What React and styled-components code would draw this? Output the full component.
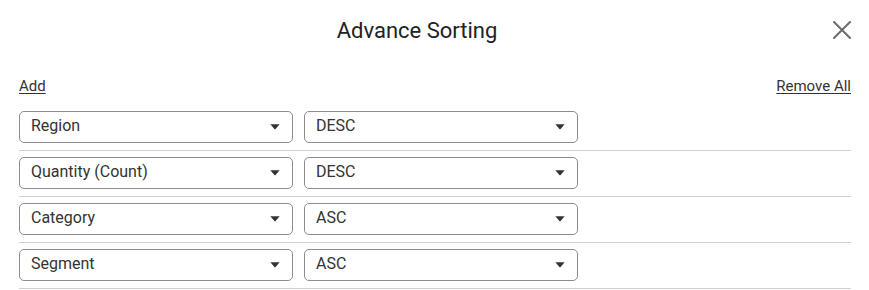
import React from 'react';
import styled, { createGlobalStyle } from 'styled-components';

const GlobalStyle = createGlobalStyle`
  body {
    margin: 0;
    background: #ffffff;
    font-family: Roboto, "Liberation Sans", Arial, sans-serif;
  }
`;

const Wrapper = styled.div`
  width: 869px;
  height: 290px;
  padding: 18px 18px 0 19px;
  box-sizing: border-box;
  overflow: hidden;
  display: flex;
  flex-direction: column;
`;

const Header = styled.div`
  height: 26px;
  display: flex;
  align-items: center;
`;

const Title = styled.h2`
  flex: 1;
  margin: 0;
  text-align: center;
  font-size: 22px;
  line-height: 26px;
  font-weight: 400;
  color: #222222;
`;

const Close = styled.button`
  width: 36px;
  height: 18px;
  padding: 0;
  border: none;
  background: none;
  cursor: pointer;
  display: flex;
  justify-content: flex-end;
  margin-top: -2px;
`;

const Actions = styled.div`
  margin-top: 33px;
  margin-bottom: 10px;
  display: flex;
  justify-content: space-between;
`;

const Link = styled.a`
  font-size: 15px;
  line-height: 18px;
  color: #333333;
  text-decoration: underline;
  text-underline-offset: 2px;
  cursor: pointer;
`;

const List = styled.div`
  display: flex;
  flex-direction: column;
`;

const Row = styled.div`
  display: flex;
  gap: 11px;
  padding: 6px 0 7px;
  border-bottom: 1px solid #d0d0d0;
`;

const Select = styled.div`
  width: ${props => props.width}px;
  height: 32px;
  box-sizing: border-box;
  padding: 0 12px 3px 11px;
  border: 1px solid #8c8c8c;
  border-radius: 5px;
  display: flex;
  align-items: center;
  justify-content: space-between;
  font-size: 16px;
  color: #333333;
  cursor: pointer;

  svg {
    margin-top: 3px;
  }
`;

const Caret = () => (
  <svg width="10" height="6" viewBox="0 0 10 6">
    <path d="M0.4 0.3 H9.6 L5.6 5 Q5 5.7 4.4 5 Z" fill="#333333" />
  </svg>
);

const sorts = [
  { field: 'Region', order: 'DESC' },
  { field: 'Quantity (Count)', order: 'DESC' },
  { field: 'Category', order: 'ASC' },
  { field: 'Segment', order: 'ASC' },
];

const App = () => (
  <>
    <GlobalStyle />
    <Wrapper>
      <Header>
        <Title>Advance Sorting</Title>
        <Close aria-label="close">
          <svg width="18" height="18" viewBox="0 0 18 18">
            <path d="M1 1 L17 17 M17 1 L1 17" stroke="#6b6b6b" strokeWidth="2" strokeLinecap="round" />
          </svg>
        </Close>
      </Header>
      <Actions>
        <Link>Add</Link>
        <Link>Remove All</Link>
      </Actions>
      <List>
        {sorts.map(sort => (
          <Row key={sort.field}>
            <Select width={274}>
              {sort.field}
              <Caret />
            </Select>
            <Select width={274}>
              {sort.order}
              <Caret />
            </Select>
          </Row>
        ))}
      </List>
    </Wrapper>
  </>
);

export default App;
